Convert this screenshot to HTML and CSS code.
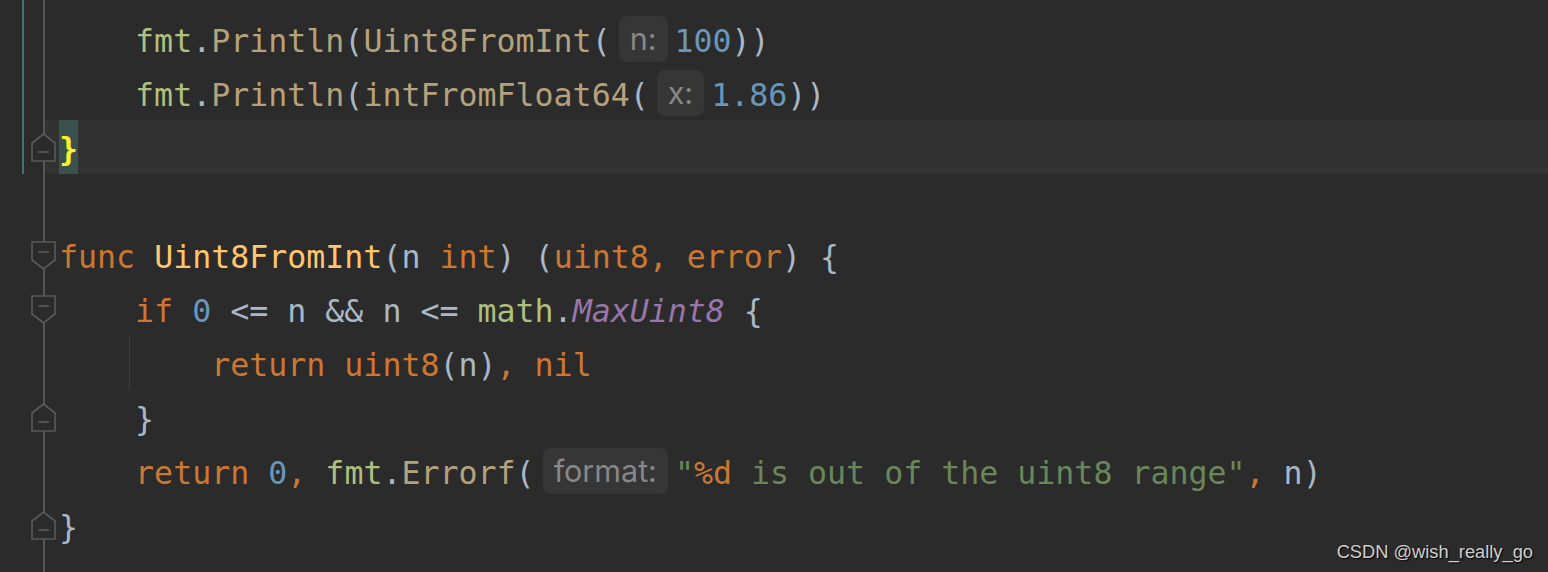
FILE: index.html
```html
<!DOCTYPE html>
<html>
<head>
<meta charset="utf-8">
<link rel="stylesheet" href="styles.css">
</head>
<body>
<div class="editor">
  <div class="spacer changed"></div>
  <div class="row changed">
    <div class="gutter"></div>
    <div class="code">    <span class="pkg">fmt</span>.<span class="call">Println</span>(<span class="call">Uint8FromInt</span>(<span class="inlay">n:</span><span class="num">100</span>))</div>
  </div>
  <div class="row changed">
    <div class="gutter"></div>
    <div class="code">    <span class="pkg">fmt</span>.<span class="call">Println</span>(<span class="call">intFromFloat64</span>(<span class="inlay">x:</span><span class="num">1.86</span>))</div>
  </div>
  <div class="row changed current">
    <div class="gutter"><svg class="fold" width="25" height="29" viewBox="0 0 25 29"><path d="M1 10 L12.5 1 L24 10 L24 28 L1 28 Z" fill="#2b2b2b" stroke="#5a5a5a" stroke-width="1.6"/><path d="M7 19 H18" stroke="#5a5a5a" stroke-width="1.6"/></svg></div>
    <div class="code"><span class="brace-match">}</span></div>
  </div>
  <div class="row">
    <div class="gutter"></div>
    <div class="code"> </div>
  </div>
  <div class="row">
    <div class="gutter"><svg class="fold" width="25" height="29" viewBox="0 0 25 29"><path d="M1 1 L24 1 L24 19 L12.5 28 L1 19 Z" fill="#2b2b2b" stroke="#5a5a5a" stroke-width="1.6"/><path d="M7 11 H18" stroke="#5a5a5a" stroke-width="1.6"/></svg></div>
    <div class="code"><span class="kw">func</span> <span class="decl">Uint8FromInt</span>(n <span class="kw">int</span>) (<span class="kw">uint8</span><span class="kw">,</span> <span class="kw">error</span>) {</div>
  </div>
  <div class="row">
    <div class="gutter"><svg class="fold" width="25" height="29" viewBox="0 0 25 29"><path d="M1 1 L24 1 L24 19 L12.5 28 L1 19 Z" fill="#2b2b2b" stroke="#5a5a5a" stroke-width="1.6"/><path d="M7 11 H18" stroke="#5a5a5a" stroke-width="1.6"/></svg></div>
    <div class="code">    <span class="kw">if</span> <span class="num">0</span> &lt;= n &amp;&amp; n &lt;= <span class="pkg">math</span>.<span class="const">MaxUint8</span> {</div>
  </div>
  <div class="row guide">
    <div class="gutter"></div>
    <div class="code">        <span class="kw">return</span> <span class="kw">uint8</span>(n)<span class="kw">,</span> <span class="kw">nil</span></div>
  </div>
  <div class="row">
    <div class="gutter"><svg class="fold" width="25" height="29" viewBox="0 0 25 29"><path d="M1 10 L12.5 1 L24 10 L24 28 L1 28 Z" fill="#2b2b2b" stroke="#5a5a5a" stroke-width="1.6"/><path d="M7 19 H18" stroke="#5a5a5a" stroke-width="1.6"/></svg></div>
    <div class="code">    }</div>
  </div>
  <div class="row">
    <div class="gutter"></div>
    <div class="code">    <span class="kw">return</span> <span class="num">0</span><span class="kw">,</span> <span class="pkg">fmt</span>.<span class="call">Errorf</span>(<span class="inlay">format:</span><span class="str">"<span class="kw">%d</span> is out of the uint8 range"</span><span class="kw">,</span> n)</div>
  </div>
  <div class="row">
    <div class="gutter"><svg class="fold" width="25" height="29" viewBox="0 0 25 29"><path d="M1 10 L12.5 1 L24 10 L24 28 L1 28 Z" fill="#2b2b2b" stroke="#5a5a5a" stroke-width="1.6"/><path d="M7 19 H18" stroke="#5a5a5a" stroke-width="1.6"/></svg></div>
    <div class="code">}</div>
  </div>
  <div class="footer">
    <span class="watermark">CSDN @wish_really_go</span>
  </div>
</div>
</body>
</html>
```
FILE: styles.css
```css
html, body {
  margin: 0;
  padding: 0;
  background: #2b2b2b;
  overflow: hidden;
}

.editor {
  width: 1548px;
  height: 572px;
  background: linear-gradient(to right, transparent 43px, #555555 43px, #555555 45px, transparent 45px) #2b2b2b;
  display: flex;
  flex-direction: column;
  overflow: hidden;
}

.spacer {
  height: 12px;
  flex: none;
}

.row {
  height: 54px;
  flex: none;
  display: flex;
  align-items: flex-start;
}

.changed {
  background-image: linear-gradient(to right, transparent 22px, #437570 22px, #437570 24px, transparent 24px);
}

.current {
  background-image:
    linear-gradient(to right, transparent 22px, #437570 22px, #437570 24px, transparent 24px),
    linear-gradient(to right, transparent 45px, #323232 45px);
}

.guide {
  background-image: linear-gradient(to right, transparent 129px, #3c3c3c 129px, #3c3c3c 130px, transparent 130px);
}

.gutter {
  width: 59px;
  flex: none;
  height: 54px;
  display: flex;
  align-items: center;
}

.fold {
  margin-left: 31px;
  display: block;
}

.code {
  font-family: "DejaVu Sans Mono", "Liberation Mono", monospace;
  font-size: 31.6px;
  line-height: 58px;
  height: 54px;
  white-space: pre;
  color: #a9b7c6;
}

.kw { color: #cc7832; }
.pkg { color: #afbf7e; }
.call { color: #b5a17c; }
.decl { color: #ffc66d; }
.num { color: #6897bb; }
.str { color: #6a8759; }
.const { color: #9876aa; font-style: italic; }

.brace-match {
  display: inline-block;
  vertical-align: top;
  height: 54px;
  background: #3b514d;
  color: #ffef28;
  font-weight: bold;
}

.inlay {
  display: inline-block;
  vertical-align: top;
  margin: 4px 7px 0 8px;
  height: 46px;
  line-height: 46px;
  padding: 0 11px;
  border-radius: 8px;
  background: #363636;
  color: #878787;
  font-family: Inter, "Noto Sans", sans-serif;
  font-size: 30.5px;
}

.footer {
  flex: 1;
  margin-top: -20px;
  display: flex;
  justify-content: flex-end;
  align-items: center;
  padding-right: 15px;
}

.watermark {
  font-family: "Liberation Sans", Arial, sans-serif;
  font-size: 18.3px;
  color: #cfcfcf;
  text-shadow: 1px 1px 1px #000;
}
```
